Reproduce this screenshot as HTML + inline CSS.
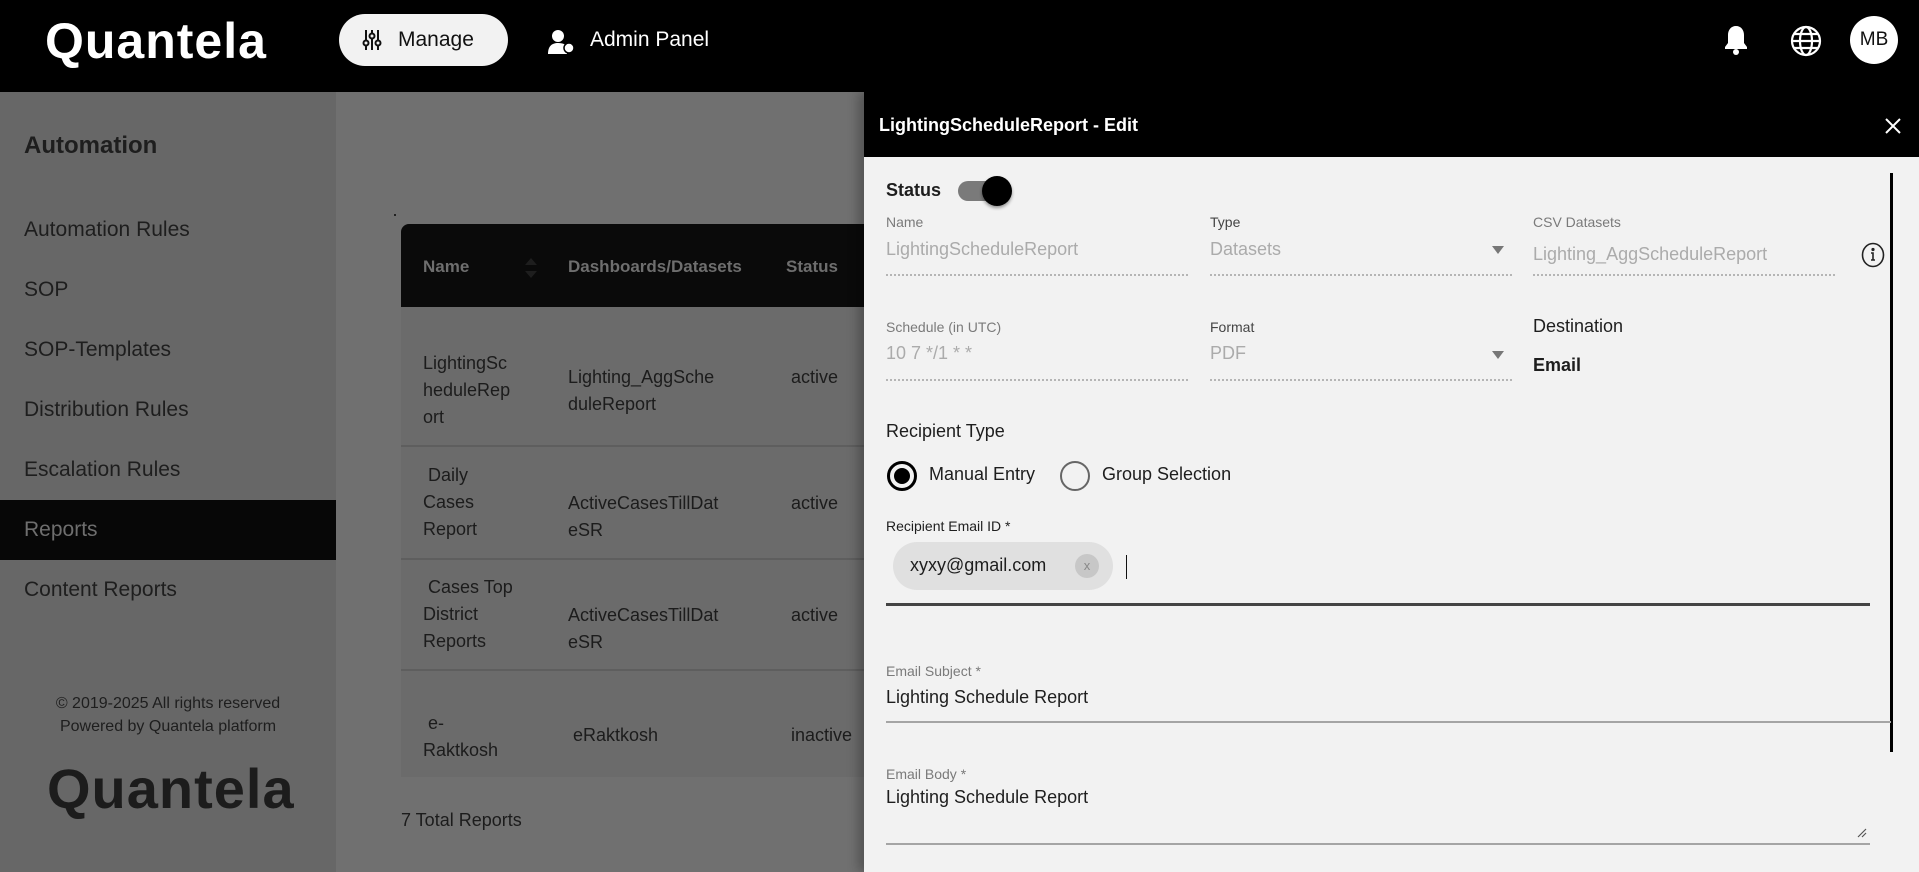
<!DOCTYPE html>
<html><head><meta charset="utf-8"><style>
*{margin:0;padding:0;box-sizing:border-box}
body{width:1919px;height:872px;overflow:hidden;position:relative;font-family:"Liberation Sans",sans-serif;background:#707070}
.a{position:absolute;white-space:nowrap}
.hdr{left:0;top:0;width:1919px;height:92px;background:#000}
.side{left:0;top:92px;width:336px;height:780px;background:#676767}
.mi{left:24px;font-size:21px;color:#1e1e1e;line-height:24px}
.tbl{left:401px;top:224px;width:470px;height:553px;background:#6b6b6b;border-radius:8px 0 0 0;overflow:hidden}
.th{font-size:17px;font-weight:bold;color:#6e6e6e}
.td{font-size:18px;color:#1c1c1c;line-height:27px}
.sep{left:401px;width:470px;height:2px;background:#5e5e5e}
.drawer{left:864px;top:92px;width:1055px;height:780px;background:#f2f2f2;box-shadow:-6px 0 10px rgba(0,0,0,.25)}
.lbl{font-size:14px;color:#7a7a7a}
.val{font-size:18px;color:#ababab}
.dot{height:0;border-bottom:2px dotted #b5b5b5}
.dk{color:#1e1e1e}
</style></head><body>
<div class="a hdr"></div>
<div class="a" style="left:45px;top:12px;font-size:50px;font-weight:bold;color:#fff;letter-spacing:1px">Quantela</div>
<div class="a" style="left:339px;top:14px;width:169px;height:52px;border-radius:26px;background:#f2f2f2"></div>
<svg class="a" style="left:362px;top:29px" width="20" height="22" viewBox="0 0 20 22" fill="none" stroke="#111" stroke-width="2"><path d="M4 1v20M10 1v20M16 1v20"/><circle cx="4" cy="14" r="2.5" fill="#f2f2f2"/><circle cx="10" cy="7" r="2.5" fill="#f2f2f2"/><circle cx="16" cy="14" r="2.5" fill="#f2f2f2"/></svg>
<div class="a" style="left:398px;top:28px;font-size:21px;color:#111">Manage</div>
<svg class="a" style="left:548px;top:29px" width="28" height="26" viewBox="0 0 28 26"><circle cx="10" cy="7" r="6" fill="#fff"/><path d="M0 25c0-8 4-11 10-11s8 2 9 4v7z" fill="#fff"/><circle cx="21" cy="19" r="5" fill="#fff" stroke="#000" stroke-width="1.5"/></svg>
<div class="a" style="left:590px;top:28px;font-size:21px;color:#fff">Admin Panel</div>
<svg class="a" style="left:1725px;top:24px" width="22" height="32" viewBox="0 0 22 32"><path d="M11 2c-5 0-8 4-8 9v8l-3 4v2h22v-2l-3-4v-8c0-5-3-9-8-9z" fill="#fff"/><circle cx="11" cy="28" r="3" fill="#fff"/></svg>
<svg class="a" style="left:1790px;top:25px" width="32" height="32" viewBox="0 0 32 32" fill="none" stroke="#fff" stroke-width="2.2"><circle cx="16" cy="16" r="14"/><ellipse cx="16" cy="16" rx="6" ry="14"/><path d="M2 16h28M4 9h24M4 23h24"/></svg>
<div class="a" style="left:1850px;top:16px;width:48px;height:48px;border-radius:50%;background:#fff;font-size:19px;color:#111;text-align:center;line-height:48px">MB</div>

<div class="a side"></div>
<div class="a" style="left:24px;top:132px;font-size:24px;font-weight:bold;color:#1e1e1e">Automation</div>
<div class="a mi" style="top:218px">Automation Rules</div>
<div class="a mi" style="top:278px">SOP</div>
<div class="a mi" style="top:338px">SOP-Templates</div>
<div class="a mi" style="top:398px">Distribution Rules</div>
<div class="a mi" style="top:458px">Escalation Rules</div>
<div class="a" style="left:0;top:500px;width:336px;height:60px;background:#070707"></div>
<div class="a mi" style="top:518px;color:#6e6e6e">Reports</div>
<div class="a mi" style="top:578px">Content Reports</div>
<div class="a" style="left:0;top:692px;width:336px;text-align:center;font-size:16px;color:#1e1e1e;line-height:23px">© 2019-2025 All rights reserved<br>Powered by Quantela platform</div>
<div class="a" style="left:47px;top:756px;font-size:56px;font-weight:bold;color:#1c1c1c;letter-spacing:1px">Quantela</div>

<div class="a" style="left:394px;top:214px;width:2px;height:2px;background:#222"></div>
<div class="a tbl"></div>
<div class="a" style="left:401px;top:224px;width:470px;height:83px;background:#0a0a0a;border-radius:8px 0 0 0"></div>
<div class="a th" style="left:423px;top:257px">Name</div>
<div class="a" style="left:525px;top:258px;width:0;height:0;border:6px solid transparent;border-bottom:7px solid #1e1e1e;border-top:0"></div>
<div class="a" style="left:525px;top:271px;width:0;height:0;border:6px solid transparent;border-top:7px solid #1e1e1e;border-bottom:0"></div>
<div class="a th" style="left:568px;top:257px;width:195px;overflow:hidden">Dashboards/Datasets</div>
<div class="a th" style="left:786px;top:257px">Status</div>
<div class="a td" style="left:423px;top:350px">LightingSc<br>heduleRep<br>ort</div>
<div class="a td" style="left:568px;top:364px">Lighting_AggSche<br>duleReport</div>
<div class="a td" style="left:791px;top:364px">active</div>
<div class="a sep" style="top:445px"></div>
<div class="a td" style="left:423px;top:462px">&nbsp;Daily<br>Cases<br>Report</div>
<div class="a td" style="left:568px;top:490px">ActiveCasesTillDat<br>eSR</div>
<div class="a td" style="left:791px;top:490px">active</div>
<div class="a sep" style="top:558px"></div>
<div class="a td" style="left:423px;top:574px">&nbsp;Cases Top<br>District<br>Reports</div>
<div class="a td" style="left:568px;top:602px">ActiveCasesTillDat<br>eSR</div>
<div class="a td" style="left:791px;top:602px">active</div>
<div class="a sep" style="top:669px"></div>
<div class="a td" style="left:423px;top:710px">&nbsp;e-<br>Raktkosh</div>
<div class="a td" style="left:573px;top:722px">eRaktkosh</div>
<div class="a td" style="left:791px;top:722px">inactive</div>
<div class="a" style="left:401px;top:810px;font-size:18px;color:#1c1c1c">7 Total Reports</div>

<div class="a drawer"></div>
<div class="a" style="left:864px;top:92px;width:1055px;height:65px;background:#000"></div>
<div class="a" style="left:879px;top:115px;font-size:18px;font-weight:bold;color:#fff">LightingScheduleReport - Edit</div>
<svg class="a" style="left:1884px;top:117px" width="18" height="18" viewBox="0 0 18 18" stroke="#fff" stroke-width="2"><path d="M2 2l14 14M16 2L2 16"/></svg>
<div class="a" style="left:1890px;top:173px;width:3px;height:579px;background:#000"></div>

<div class="a" style="left:886px;top:180px;font-size:18px;font-weight:bold;color:#1e1e1e">Status</div>
<div class="a" style="left:958px;top:181px;width:44px;height:20px;border-radius:10px;background:#7a7a7a"></div>
<div class="a" style="left:982px;top:176px;width:30px;height:30px;border-radius:50%;background:#000;box-shadow:0 2px 3px rgba(0,0,0,.4)"></div>

<div class="a lbl" style="left:886px;top:214px">Name</div>
<div class="a lbl dk" style="left:1210px;top:214px;color:#444">Type</div>
<div class="a lbl" style="left:1533px;top:214px">CSV Datasets</div>
<div class="a val" style="left:886px;top:239px">LightingScheduleReport</div>
<div class="a val" style="left:1210px;top:239px">Datasets</div>
<div class="a" style="left:1492px;top:246px;border:6px solid transparent;border-top:8px solid #777;border-bottom:0"></div>
<div class="a val" style="left:1533px;top:244px">Lighting_AggScheduleReport</div>
<svg class="a" style="left:1861px;top:242px" width="24" height="26" viewBox="0 0 24 26" fill="none" stroke="#222" stroke-width="1.6"><ellipse cx="12" cy="13" rx="10.5" ry="11.5"/><path d="M10 11h2v7M10 18h4"/><circle cx="12" cy="7.5" r="0.8" fill="#222"/></svg>
<div class="a dot" style="left:886px;top:274px;width:302px"></div>
<div class="a dot" style="left:1210px;top:274px;width:302px"></div>
<div class="a dot" style="left:1533px;top:274px;width:302px"></div>

<div class="a lbl" style="left:886px;top:319px">Schedule (in UTC)</div>
<div class="a lbl" style="left:1210px;top:319px;color:#444">Format</div>
<div class="a" style="left:1533px;top:316px;font-size:18px;color:#1e1e1e">Destination</div>
<div class="a val" style="left:886px;top:343px">10 7 */1 * *</div>
<div class="a val" style="left:1210px;top:343px">PDF</div>
<div class="a" style="left:1492px;top:351px;border:6px solid transparent;border-top:8px solid #777;border-bottom:0"></div>
<div class="a" style="left:1533px;top:355px;font-size:18px;font-weight:bold;color:#1e1e1e">Email</div>
<div class="a dot" style="left:886px;top:379px;width:302px"></div>
<div class="a dot" style="left:1210px;top:379px;width:302px"></div>

<div class="a" style="left:886px;top:421px;font-size:18px;color:#1e1e1e">Recipient Type</div>
<div class="a" style="left:887px;top:461px;width:30px;height:30px;border-radius:50%;border:3px solid #000;background:#f2f2f2"></div>
<div class="a" style="left:894px;top:468px;width:16px;height:16px;border-radius:50%;background:#000"></div>
<div class="a" style="left:929px;top:464px;font-size:18px;color:#1e1e1e">Manual Entry</div>
<div class="a" style="left:1060px;top:461px;width:30px;height:30px;border-radius:50%;border:2px solid #666"></div>
<div class="a" style="left:1102px;top:464px;font-size:18px;color:#1e1e1e">Group Selection</div>

<div class="a" style="left:886px;top:518px;font-size:14px;color:#1e1e1e">Recipient Email ID *</div>
<div class="a" style="left:893px;top:542px;width:220px;height:48px;border-radius:24px;background:#e0e0e0"></div>
<div class="a" style="left:910px;top:555px;font-size:18px;color:#1e1e1e">xyxy@gmail.com</div>
<div class="a" style="left:1075px;top:554px;width:24px;height:24px;border-radius:50%;background:#c7c7c7;color:#888;font-size:13px;text-align:center;line-height:23px">x</div>
<div class="a" style="left:1126px;top:555px;width:1px;height:24px;background:#111"></div>
<div class="a" style="left:886px;top:603px;width:984px;height:3px;background:#444"></div>

<div class="a lbl" style="left:886px;top:663px">Email Subject *</div>
<div class="a" style="left:886px;top:687px;font-size:18px;color:#1e1e1e">Lighting Schedule Report</div>
<div class="a" style="left:886px;top:721px;width:1005px;height:2px;background:#a5a5a5"></div>

<div class="a lbl" style="left:886px;top:766px">Email Body *</div>
<div class="a" style="left:886px;top:787px;font-size:18px;color:#1e1e1e">Lighting Schedule Report</div>
<svg class="a" style="left:1855px;top:826px" width="12" height="12" viewBox="0 0 12 12" stroke="#555" stroke-width="1.2"><path d="M11 3L3 11M11 7L7 11"/></svg>
<div class="a" style="left:886px;top:843px;width:984px;height:2px;background:#a5a5a5"></div>
</body></html>
